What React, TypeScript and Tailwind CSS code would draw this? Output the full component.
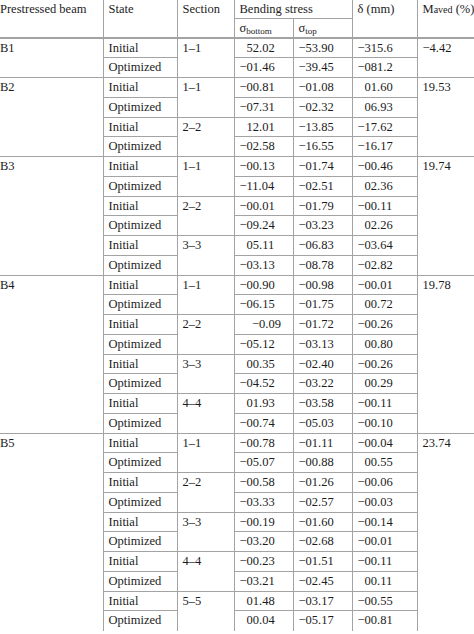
type Pair = {
  section: string;
  initial: [string, string, string];
  optimized: [string, string, string];
};

type Beam = {
  name: string;
  saved: string;
  sections: Pair[];
};

const beams: Beam[] = [
  {
    name: "B1",
    saved: "−4.42",
    sections: [
      { section: "1–1", initial: ["52.02", "−53.90", "−315.6"], optimized: ["−01.46", "−39.45", "−081.2"] },
    ],
  },
  {
    name: "B2",
    saved: "19.53",
    sections: [
      { section: "1–1", initial: ["−00.81", "−01.08", "01.60"], optimized: ["−07.31", "−02.32", "06.93"] },
      { section: "2–2", initial: ["12.01", "−13.85", "−17.62"], optimized: ["−02.58", "−16.55", "−16.17"] },
    ],
  },
  {
    name: "B3",
    saved: "19.74",
    sections: [
      { section: "1–1", initial: ["−00.13", "−01.74", "−00.46"], optimized: ["−11.04", "−02.51", "02.36"] },
      { section: "2–2", initial: ["−00.01", "−01.79", "−00.11"], optimized: ["−09.24", "−03.23", "02.26"] },
      { section: "3–3", initial: ["05.11", "−06.83", "−03.64"], optimized: ["−03.13", "−08.78", "−02.82"] },
    ],
  },
  {
    name: "B4",
    saved: "19.78",
    sections: [
      { section: "1–1", initial: ["−00.90", "−00.98", "−00.01"], optimized: ["−06.15", "−01.75", "00.72"] },
      { section: "2–2", initial: ["−0.09", "−01.72", "−00.26"], optimized: ["−05.12", "−03.13", "00.80"] },
      { section: "3–3", initial: ["00.35", "−02.40", "−00.26"], optimized: ["−04.52", "−03.22", "00.29"] },
      { section: "4–4", initial: ["01.93", "−03.58", "−00.11"], optimized: ["−00.74", "−05.03", "−00.10"] },
    ],
  },
  {
    name: "B5",
    saved: "23.74",
    sections: [
      { section: "1–1", initial: ["−00.78", "−01.11", "−00.04"], optimized: ["−05.07", "−00.88", "00.55"] },
      { section: "2–2", initial: ["−00.58", "−01.26", "−00.06"], optimized: ["−03.33", "−02.57", "−00.03"] },
      { section: "3–3", initial: ["−00.19", "−01.60", "−00.14"], optimized: ["−03.20", "−02.68", "−00.01"] },
      { section: "4–4", initial: ["−00.23", "−01.51", "−00.11"], optimized: ["−03.21", "−02.45", "00.11"] },
      { section: "5–5", initial: ["01.48", "−03.17", "−00.55"], optimized: ["00.04", "−05.17", "−00.81"] },
    ],
  },
];

// positive values keep a blank where the minus sign would be; "−0.09" sits further right
const Num = ({ v }: { v: string }) => {
  if (v === "−0.09") return <><span className="invisible">00</span>{v}</>;
  return v.startsWith("−") ? <>{v}</> : <><span className="invisible">−</span>{v}</>;
};

const cell = "align-top border-t border-[#a3a3a3] h-[19.75px] pl-[5px] pt-[1px] leading-[17px]";
const line = "border-l border-[#a3a3a3]";
const head = "font-normal text-left align-top leading-[17px] pt-[1px]";

export default function App() {
  return (
    <div className="bg-white w-[474px] h-[634px] overflow-hidden text-[#1c1c1c] text-[12.5px] font-['Liberation_Serif','DejaVu_Serif',serif]">
      <table className="table-fixed border-collapse w-[474px] font-['Liberation_Serif','DejaVu_Serif',serif]">
        <colgroup>
          <col className="w-[103px]" />
          <col className="w-[74px]" />
          <col className="w-[57px]" />
          <col className="w-[59px]" />
          <col className="w-[59px]" />
          <col className="w-[65px]" />
          <col className="w-[57px]" />
        </colgroup>
        <thead>
          <tr>
            <th rowSpan={2} className={`${head} whitespace-nowrap border-b-2 border-[#a3a3a3]`}>Prestressed beam</th>
            <th rowSpan={2} className={`${head} pl-[5px] border-b-2 border-[#a3a3a3] ${line}`}>State</th>
            <th rowSpan={2} className={`${head} pl-[5px] border-b-2 border-[#a3a3a3] ${line}`}>Section</th>
            <th colSpan={2} className={`${head} pl-[5px] h-[18px] border-b border-[#a3a3a3] ${line}`}>Bending stress</th>
            <th rowSpan={2} className={`${head} pl-[5px] whitespace-nowrap border-b-2 border-[#a3a3a3] ${line}`}>δ (mm)</th>
            <th rowSpan={2} className={`${head} pl-[5px] whitespace-nowrap border-b-2 border-[#a3a3a3] ${line}`}>
              M<span className="text-[10px]">aved</span> (%)
            </th>
          </tr>
          <tr>
            <th className={`${head} pl-[5px] h-[18px] border-b-2 border-[#a3a3a3] ${line}`}>
              σ<sub className="text-[9px]">bottom</sub>
            </th>
            <th className={`${head} pl-[5px] h-[18px] border-b-2 border-[#a3a3a3] ${line}`}>
              σ<sub className="text-[9px]">top</sub>
            </th>
          </tr>
        </thead>
        <tbody>
          {beams.map((b) =>
            b.sections.map((s, si) => (
              <>
                <tr key={b.name + s.section + "i"}>
                  {si === 0 && (
                    <td rowSpan={b.sections.length * 2} className="align-top border-t border-[#a3a3a3] pt-[1px] leading-[17px]">
                      {b.name}
                    </td>
                  )}
                  <td className={`${cell} ${line}`}>Initial</td>
                  <td rowSpan={2} className={`${cell} ${line}`}>{s.section}</td>
                  {s.initial.map((v, i) => (
                    <td key={i} className={`${cell} ${line} whitespace-nowrap`}><Num v={v} /></td>
                  ))}
                  {si === 0 && (
                    <td rowSpan={b.sections.length * 2} className={`align-top border-t border-[#a3a3a3] pl-[5px] pt-[1px] leading-[17px] ${line}`}>
                      {b.saved}
                    </td>
                  )}
                </tr>
                <tr key={b.name + s.section + "o"}>
                  <td className={`${cell} ${line}`}>Optimized</td>
                  {s.optimized.map((v, i) => (
                    <td key={i} className={`${cell} ${line} whitespace-nowrap`}><Num v={v} /></td>
                  ))}
                </tr>
              </>
            ))
          )}
        </tbody>
      </table>
    </div>
  );
}
